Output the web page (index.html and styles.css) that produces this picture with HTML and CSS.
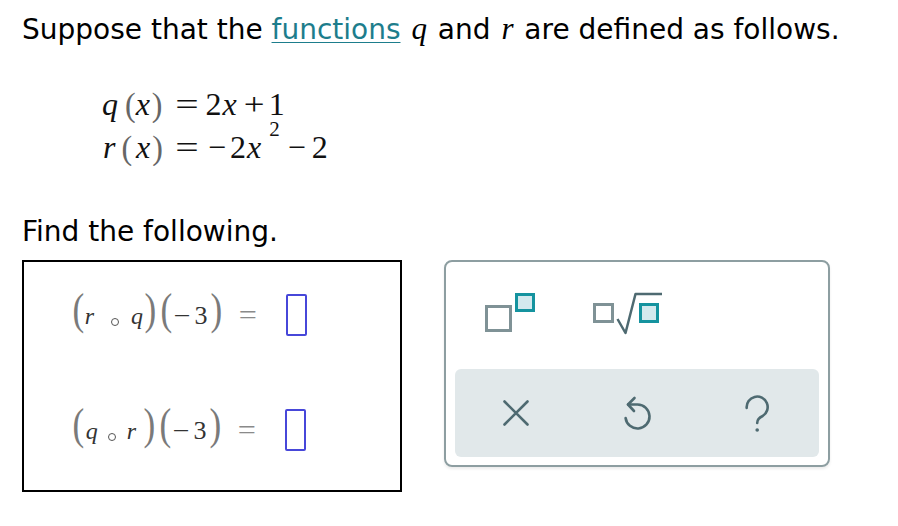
FILE: index.html
```html
<!DOCTYPE html>
<html>
<head>
<meta charset="utf-8">
<link rel="stylesheet" href="styles.css">
</head>
<body>
<div class="page">
  <p class="intro">Suppose that the <a class="link" href="#">functions</a> <span class="mvar">q</span> and <span class="mvar">r</span> are defined as follows.</p>
  <div class="defs">
    <div class="def def-q"><span class="mi t-f">q</span><span class="dp t-o">(</span><span class="mi t-x">x</span><span class="dp t-c">)</span><span class="mo t-eq">=</span><span class="mn t-2">2</span><span class="mi t-x2">x</span><span class="mo t-plus">+</span><span class="mn t-1">1</span></div>
    <div class="def def-r"><span class="mi t-f">r</span><span class="dp t-o">(</span><span class="mi t-x">x</span><span class="dp t-c">)</span><span class="mo t-eq">=</span><span class="mo t-neg">−</span><span class="mn t-2">2</span><span class="mi t-x2">x</span><sup class="sup">2</sup><span class="mo t-minus">−</span><span class="mn t-1">2</span></div>
  </div>
  <p class="find">Find the following.</p>
  <div class="work">
    <div class="answers">
      <div class="arow row-rq">
        <span class="bp bp-o1">(</span><span class="v v1">r</span><span class="comp"></span><span class="v v2">q</span><span class="bp bp-c1">)</span><span class="bp bp-o2">(</span><span class="n n-neg">−</span><span class="n n-3">3</span><span class="bp bp-c2">)</span><span class="eqs">=</span><span class="ans"></span>
      </div>
      <div class="arow row-qr">
        <span class="bp bp-o1">(</span><span class="v v1">q</span><span class="comp"></span><span class="v v2">r</span><span class="bp bp-c1">)</span><span class="bp bp-o2">(</span><span class="n n-neg">−</span><span class="n n-3">3</span><span class="bp bp-c2">)</span><span class="eqs">=</span><span class="ans"></span>
      </div>
    </div>
    <div class="keypad">
      <div class="tools">
        <svg class="ico-sup" width="52" height="42" viewBox="0 0 52 42">
          <rect x="2.5" y="14.5" width="24" height="24" fill="none" stroke="#7f9296" stroke-width="3"/>
          <rect x="32.5" y="2.5" width="17" height="16" fill="#d3e9ee" stroke="#15939f" stroke-width="3"/>
        </svg>
        <svg class="ico-sqrt" width="72" height="44" viewBox="0 0 72 44">
          <rect x="2.5" y="12.5" width="18" height="17" fill="none" stroke="#7f9296" stroke-width="3"/>
          <path d="M25.5 27 L33.5 41 L43.5 2 H70" fill="none" stroke="#4e6a71" stroke-width="2.5" stroke-linejoin="round"/>
          <rect x="48.5" y="12.5" width="17" height="17" fill="#d3e9ee" stroke="#15939f" stroke-width="3"/>
        </svg>
      </div>
      <div class="actions">
        <div class="act">
          <svg width="28" height="28" viewBox="0 0 28 28">
            <path d="M2.5 2.5 L25.5 25.5 M25.5 2.5 L2.5 25.5" fill="none" stroke="#4e6a71" stroke-width="2.6" stroke-linecap="round"/>
          </svg>
        </div>
        <div class="act">
          <svg width="30" height="36" viewBox="0 0 30 36">
            <path d="M6 9.5 H15.5 A12 12 0 1 1 3.6 23" fill="none" stroke="#4e6a71" stroke-width="2.6" stroke-linecap="round"/>
            <path d="M12.5 3 L6 9.5 L12 16" fill="none" stroke="#4e6a71" stroke-width="2.6" stroke-linecap="round" stroke-linejoin="round"/>
          </svg>
        </div>
        <div class="act">
          <svg width="26" height="40" viewBox="0 0 26 40">
            <path d="M1.7 15 A10.5 10.5 0 1 1 17.7 23 Q12.2 25.5 12.2 30" fill="none" stroke="#4e6a71" stroke-width="2.6" stroke-linecap="round"/>
            <circle cx="12.2" cy="37" r="1.8" fill="#4e6a71"/>
          </svg>
        </div>
      </div>
    </div>
  </div>
</div>
</body>
</html>
```
FILE: styles.css
```css
html, body {
  margin: 0;
  padding: 0;
  background: #ffffff;
}

body {
  font-family: "DejaVu Sans", Verdana, sans-serif;
  color: #000;
}

.page {
  padding-left: 22px;
}

/* ---------- intro ---------- */
.intro {
  margin: 13px 0 0;
  font-size: 28px;
  line-height: 32px;
  white-space: nowrap;
}

.link {
  color: #1d7d8c;
  text-decoration: underline;
  text-decoration-thickness: 1px;
  text-underline-offset: 3px;
}

.mvar {
  font-family: "Liberation Serif", serif;
  font-style: italic;
  font-size: 31px;
  margin: 0 2px;
}

/* ---------- definitions ---------- */
.defs {
  margin: 37px 0 0 80px;
  font-family: "Liberation Serif", serif;
  font-size: 32px;
  color: #111;
}

.def {
  height: 43px;
  line-height: 43px;
  white-space: nowrap;
}

.def span,
.def sup {
  display: inline-block;
}

.mi {
  font-style: italic;
}

.dp {
  color: #666;
  transform: scaleY(1.05);
}

.t-eq {
  transform: scaleX(1.3);
  margin-left: 15px;
}

.t-plus {
  transform: scaleX(1.15);
  margin-left: 8px;
}

.def-q .t-o { margin-left: 7px; }
.def-r .t-o { margin-left: 6px; }
.def-q .t-x { margin-left: 0; }
.def-r .t-x { margin-left: 4px; }
.t-c { margin-left: 2px; }
.def-q .t-2 { margin-left: 10px; }
.def-q .t-x2 { margin-left: 1px; }
.def-q .t-1 { margin-left: 6px; }

.def-r .t-f { margin-left: 1px; }
.t-neg { margin-left: 12px; }
.def-r .t-2 { margin-left: 4px; }
.def-r .t-x2 { margin-left: 1px; }
.sup {
  font-size: 21px;
  vertical-align: 22px;
  line-height: 0;
  margin-left: 8px;
}
.t-minus { margin-left: 8px; }
.def-r .t-1 { margin-left: 6px; }

/* ---------- find ---------- */
.find {
  margin: 47px 0 0;
  font-size: 28px;
  line-height: 32px;
}

.work {
  display: flex;
  align-items: flex-start;
  margin-top: 12px;
}

/* ---------- answers box ---------- */
.answers {
  box-sizing: border-box;
  width: 380px;
  height: 232px;
  border: 2px solid #000;
  padding: 32px 0 0 47px;
  display: flex;
  flex-direction: column;
  gap: 73px;
}

.arow {
  display: flex;
  align-items: baseline;
  height: 42px;
  font-family: "Liberation Serif", serif;
  font-size: 24px;
  color: #333;
}

.bp {
  font-size: 44px;
  line-height: 32px;
  color: #7a7a7a;
  transform: scaleX(0.8);
}

.v {
  font-style: italic;
}

.comp {
  align-self: flex-start;
  box-sizing: border-box;
  width: 8px;
  height: 8px;
  border: 1.5px solid #555;
  border-radius: 50%;
  margin-top: 24px;
}

.row-rq .v1 { margin-left: -1px; }
.row-rq .comp { margin-left: 17px; }
.row-rq .v2 { margin-left: 12px; }
.row-rq .bp-c1 { margin-left: 0; }

.row-qr .v1 { margin-left: 0; }
.row-qr .comp { margin-left: 10px; }
.row-qr .v2 { margin-left: 11px; }
.row-qr .bp-c1 { margin-left: 6px; }

.bp-o2 { margin-left: 1px; }
.n-neg {
  margin-left: 2px;
  font-size: 25px;
  transform: scaleX(1.2);
}
.n-3 {
  margin-left: 5px;
  font-size: 26px;
}
.bp-c2 { margin-left: 2px; }

.eqs {
  margin-left: 16px;
  color: #8a8a8a;
  font-size: 28px;
  transform: scaleX(1.15);
}

.ans {
  align-self: flex-start;
  box-sizing: border-box;
  width: 21px;
  height: 42px;
  margin-left: 30px;
  border: 2px solid #4747d9;
  border-radius: 2px;
}

/* ---------- keypad ---------- */
.keypad {
  box-sizing: border-box;
  width: 386px;
  height: 207px;
  margin-left: 42px;
  border: 2px solid #8d9ea1;
  border-radius: 8px;
  box-shadow: 0 2px 3px rgba(0, 0, 0, 0.08);
  padding: 0 9px 8px;
  display: flex;
  flex-direction: column;
}

.tools {
  height: 107px;
  box-sizing: border-box;
  padding: 30px 0 0 29px;
  display: flex;
  align-items: flex-start;
  gap: 56px;
}

.actions {
  flex: 1;
  background: #e1e8ea;
  border-radius: 6px;
  display: grid;
  grid-template-columns: 1fr 1fr 1fr;
  align-items: center;
  justify-items: center;
}

.act {
  display: flex;
  align-items: center;
  justify-content: center;
}

.act svg {
  display: block;
}
```
